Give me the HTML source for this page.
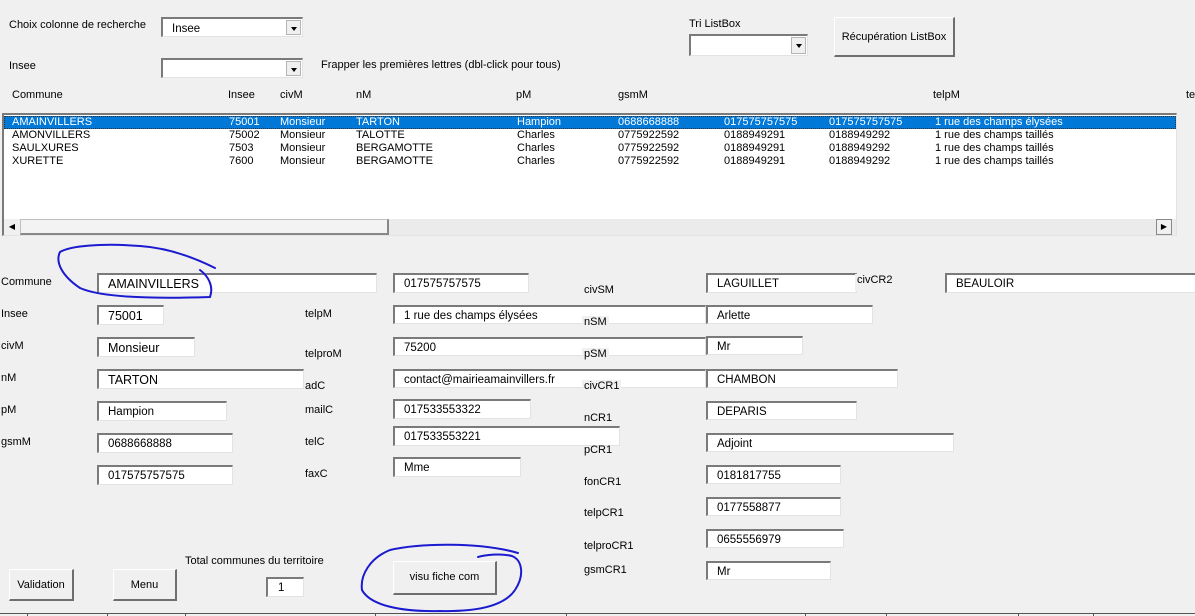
<!DOCTYPE html>
<html><head><meta charset="utf-8"><style>
*{margin:0;padding:0;box-sizing:border-box}
body{width:1195px;height:616px;background:#f0f0f0;position:relative;overflow:hidden;font-family:"Liberation Sans",sans-serif;font-size:11px;color:#000}
.a{position:absolute;white-space:nowrap}
.l{position:absolute;white-space:nowrap;line-height:13px;margin-top:2px}
.tb{position:absolute;background:#fff;border-top:2px solid #7a7a7a;border-left:2px solid #7a7a7a;border-bottom:1px solid #e3e3e3;border-right:1px solid #e3e3e3;font-size:11.5px;padding-left:9px;padding-top:2px;line-height:15px;white-space:nowrap;overflow:hidden}
.cb{position:absolute;background:#fff;border-top:2px solid #7a7a7a;border-left:2px solid #7a7a7a;border-bottom:1px solid #e3e3e3;border-right:1px solid #e3e3e3;font-size:11.5px;padding-left:9px;padding-top:2px;line-height:16px}
.cb i{position:absolute;right:1px;top:1px;bottom:1px;width:15px;background:#f0f0f0;border:1px solid #b5b5b5}
.cb i:after{content:"";position:absolute;left:4px;top:6px;border-left:3px solid transparent;border-right:3px solid transparent;border-top:4px solid #000}
.bt{position:absolute;background:#f0f0f0;border-top:1px solid #fff;border-left:1px solid #fff;border-right:2px solid #6e6e6e;border-bottom:2px solid #6e6e6e;text-align:center;font-size:11px}
.lb{position:absolute;background:#f0f0f0}
</style></head><body>
<div class="l" style="left:9px;top:17px">Choix colonne de recherche</div>
<div class="cb" style="left:161px;top:17px;width:142px;height:20px">Insee<i></i></div>
<div class="l" style="left:9px;top:58px">Insee</div>
<div class="cb" style="left:161px;top:58px;width:142px;height:20px"><i></i></div>
<div class="l" style="left:321px;top:57px">Frapper les premières lettres (dbl-click pour tous)</div>
<div class="l" style="left:689px;top:16px">Tri ListBox</div>
<div class="cb" style="left:689px;top:34px;width:119px;height:22px"><i></i></div>
<div class="bt" style="left:834px;top:17px;width:121px;height:40px;line-height:38px">Récupération ListBox</div>

<div class="l" style="left:12px;top:87px">Commune</div>
<div class="l" style="left:228px;top:87px">Insee</div>
<div class="l" style="left:280px;top:87px">civM</div>
<div class="l" style="left:356px;top:87px">nM</div>
<div class="l" style="left:516px;top:87px">pM</div>
<div class="l" style="left:618px;top:87px">gsmM</div>
<div class="l" style="left:933px;top:87px">telpM</div>
<div class="l" style="left:1186px;top:87px">te</div>

<div style="position:absolute;left:2px;top:113px;width:1175px;height:123px;background:#fff;border-top:2px solid #7a7a7a;border-left:2px solid #7a7a7a;border-right:1px solid #e3e3e3;border-bottom:1px solid #e3e3e3"></div>
<div style="position:absolute;left:4px;top:116px;width:1172px;height:13px;background:#0078d7;border:1px dotted #333"></div>
<div style="position:absolute;left:4px;top:219px;width:1172px;height:16px;background:#ebebeb"></div>
<div style="position:absolute;left:4px;top:219px;width:16px;height:16px;background:#f0f0f0;font-size:8px;line-height:16px;text-align:center">◀</div>
<div style="position:absolute;left:20px;top:219px;width:369px;height:16px;background:#f3f3f3;border:1px solid #c0c0c0;border-right:2px solid #888;border-bottom:2px solid #888"></div>
<div style="position:absolute;left:1156px;top:219px;width:16px;height:16px;background:#f0f0f0;border:1px solid #888;font-size:8px;line-height:14px;text-align:center">▶</div>
<div style="position:absolute;top:116px;left:0;font-size:11px;line-height:13px">
<div class="a" style="left:12px;top:0;color:#fff">AMAINVILLERS</div><div class="a" style="left:229px;top:0;color:#fff">75001</div><div class="a" style="left:280px;top:0;color:#fff">Monsieur</div><div class="a" style="left:356px;top:0;color:#fff">TARTON</div><div class="a" style="left:517px;top:0;color:#fff">Hampion</div><div class="a" style="left:618px;top:0;color:#fff">0688668888</div><div class="a" style="left:724px;top:0;color:#fff">017575757575</div><div class="a" style="left:829px;top:0;color:#fff">017575757575</div><div class="a" style="left:935px;top:0;color:#fff">1 rue des champs élysées</div>
<div class="a" style="left:12px;top:13px">AMONVILLERS</div><div class="a" style="left:229px;top:13px">75002</div><div class="a" style="left:280px;top:13px">Monsieur</div><div class="a" style="left:356px;top:13px">TALOTTE</div><div class="a" style="left:517px;top:13px">Charles</div><div class="a" style="left:618px;top:13px">0775922592</div><div class="a" style="left:724px;top:13px">0188949291</div><div class="a" style="left:829px;top:13px">0188949292</div><div class="a" style="left:935px;top:13px">1 rue des champs taillés</div>
<div class="a" style="left:12px;top:26px">SAULXURES</div><div class="a" style="left:229px;top:26px">7503</div><div class="a" style="left:280px;top:26px">Monsieur</div><div class="a" style="left:356px;top:26px">BERGAMOTTE</div><div class="a" style="left:517px;top:26px">Charles</div><div class="a" style="left:618px;top:26px">0775922592</div><div class="a" style="left:724px;top:26px">0188949291</div><div class="a" style="left:829px;top:26px">0188949292</div><div class="a" style="left:935px;top:26px">1 rue des champs taillés</div>
<div class="a" style="left:12px;top:39px">XURETTE</div><div class="a" style="left:229px;top:39px">7600</div><div class="a" style="left:280px;top:39px">Monsieur</div><div class="a" style="left:356px;top:39px">BERGAMOTTE</div><div class="a" style="left:517px;top:39px">Charles</div><div class="a" style="left:618px;top:39px">0775922592</div><div class="a" style="left:724px;top:39px">0188949291</div><div class="a" style="left:829px;top:39px">0188949292</div><div class="a" style="left:935px;top:39px">1 rue des champs taillés</div>
</div>

<div class="l" style="left:1px;top:274px">Commune</div>
<div class="tb" style="left:97px;top:273px;width:280px;height:20px;font-size:12.5px">AMAINVILLERS</div>
<div class="l" style="left:1px;top:306px">Insee</div>
<div class="tb" style="left:97px;top:305px;width:67px;height:20px;font-size:12.5px">75001</div>
<div class="l" style="left:1px;top:338px">civM</div>
<div class="tb" style="left:97px;top:337px;width:98px;height:20px;font-size:12.5px">Monsieur</div>
<div class="l" style="left:1px;top:370px">nM</div>
<div class="tb" style="left:97px;top:369px;width:207px;height:20px;font-size:12.5px">TARTON</div>
<div class="l" style="left:1px;top:402px">pM</div>
<div class="tb" style="left:97px;top:401px;width:130px;height:20px">Hampion</div>
<div class="l" style="left:1px;top:434px">gsmM</div>
<div class="tb" style="left:97px;top:433px;width:136px;height:20px">0688668888</div>
<div class="tb" style="left:97px;top:465px;width:136px;height:20px">017575757575</div>

<div class="tb" style="left:393px;top:273px;width:136px;height:20px">017575757575</div>
<div class="l" style="left:305px;top:306px">telpM</div>
<div class="tb" style="left:393px;top:305px;width:313px;height:19px">1 rue des champs élysées</div>
<div class="l" style="left:305px;top:346px">telproM</div>
<div class="tb" style="left:393px;top:337px;width:313px;height:19px">75200</div>
<div class="l" style="left:305px;top:378px">adC</div>
<div class="tb" style="left:393px;top:369px;width:313px;height:19px">contact@mairieamainvillers.fr</div>
<div class="l" style="left:305px;top:402px">mailC</div>
<div class="tb" style="left:393px;top:399px;width:138px;height:20px">017533553322</div>
<div class="l" style="left:305px;top:434px">telC</div>
<div class="tb" style="left:393px;top:426px;width:227px;height:20px">017533553221</div>
<div class="l" style="left:305px;top:466px">faxC</div>
<div class="tb" style="left:393px;top:457px;width:128px;height:20px">Mme</div>

<div class="l lb" style="left:582px;top:282px;padding:0 2px">civSM</div>
<div class="l lb" style="left:582px;top:314px;padding:0 2px">nSM</div>
<div class="l lb" style="left:582px;top:346px;padding:0 2px">pSM</div>
<div class="l lb" style="left:582px;top:378px;padding:0 2px 2px">civCR1</div>
<div class="l" style="left:584px;top:410px">nCR1</div>
<div class="l" style="left:584px;top:442px">pCR1</div>
<div class="l" style="left:584px;top:474px">fonCR1</div>
<div class="l" style="left:584px;top:505px">telpCR1</div>
<div class="l" style="left:584px;top:538px">telproCR1</div>
<div class="l" style="left:584px;top:562px">gsmCR1</div>

<div class="tb" style="left:706px;top:273px;width:151px;height:20px">LAGUILLET</div>
<div class="l lb" style="left:855px;top:272px;width:47px;height:17px;padding-left:2px">civCR2</div>
<div class="tb" style="left:945px;top:273px;width:252px;height:20px">BEAULOIR</div>
<div class="tb" style="left:706px;top:305px;width:167px;height:19px">Arlette</div>
<div class="tb" style="left:706px;top:336px;width:97px;height:19px">Mr</div>
<div class="tb" style="left:706px;top:369px;width:192px;height:19px">CHAMBON</div>
<div class="tb" style="left:706px;top:401px;width:151px;height:19px">DEPARIS</div>
<div class="tb" style="left:706px;top:433px;width:248px;height:19px">Adjoint</div>
<div class="tb" style="left:706px;top:465px;width:135px;height:19px">0181817755</div>
<div class="tb" style="left:706px;top:497px;width:135px;height:19px">0177558877</div>
<div class="tb" style="left:706px;top:529px;width:138px;height:19px">0655556979</div>
<div class="tb" style="left:706px;top:561px;width:125px;height:19px">Mr</div>

<div class="l" style="left:185px;top:553px">Total communes du territoire</div>
<div class="tb" style="left:266px;top:577px;width:38px;height:20px;padding-left:10px">1</div>
<div class="bt" style="left:9px;top:569px;width:65px;height:32px;line-height:30px">Validation</div>
<div class="bt" style="left:113px;top:569px;width:64px;height:32px;line-height:30px">Menu</div>
<div class="bt" style="left:393px;top:561px;width:104px;height:34px;line-height:31px">visu fiche com</div>

<div style="position:absolute;left:0;top:613px;width:1195px;height:3px;border-top:1px solid #555"></div>
<div style="position:absolute;top:613px;left:27px;width:1px;height:3px;background:#555"></div>
<div style="position:absolute;top:613px;left:107px;width:1px;height:3px;background:#555"></div>
<div style="position:absolute;top:613px;left:185px;width:1px;height:3px;background:#555"></div>
<div style="position:absolute;top:613px;left:375px;width:1px;height:3px;background:#555"></div>
<div style="position:absolute;top:613px;left:566px;width:1px;height:3px;background:#555"></div>
<div style="position:absolute;top:613px;left:805px;width:1px;height:3px;background:#555"></div>
<div style="position:absolute;top:613px;left:886px;width:1px;height:3px;background:#555"></div>
<div style="position:absolute;top:613px;left:1018px;width:1px;height:3px;background:#555"></div>
<div style="position:absolute;top:613px;left:1093px;width:1px;height:3px;background:#555"></div>

<svg style="position:absolute;left:0;top:0" width="1195" height="616">
<g fill="none" stroke="#1a1ad0" stroke-width="2" stroke-linecap="round">
<path d="M215,268 C195,258 170,248 140,246 C100,243 70,246 60,252 C55,262 62,276 80,288 C100,297 150,299 210,297 C214,286 208,276 200,270"/>
<path d="M518,553 C480,542 420,543 390,550 C370,558 360,575 362,590 C370,605 400,612 440,611 C480,612 505,605 515,590 C525,575 522,560 512,556 C500,553 485,555 478,557"/>
</g></svg>
</body></html>
